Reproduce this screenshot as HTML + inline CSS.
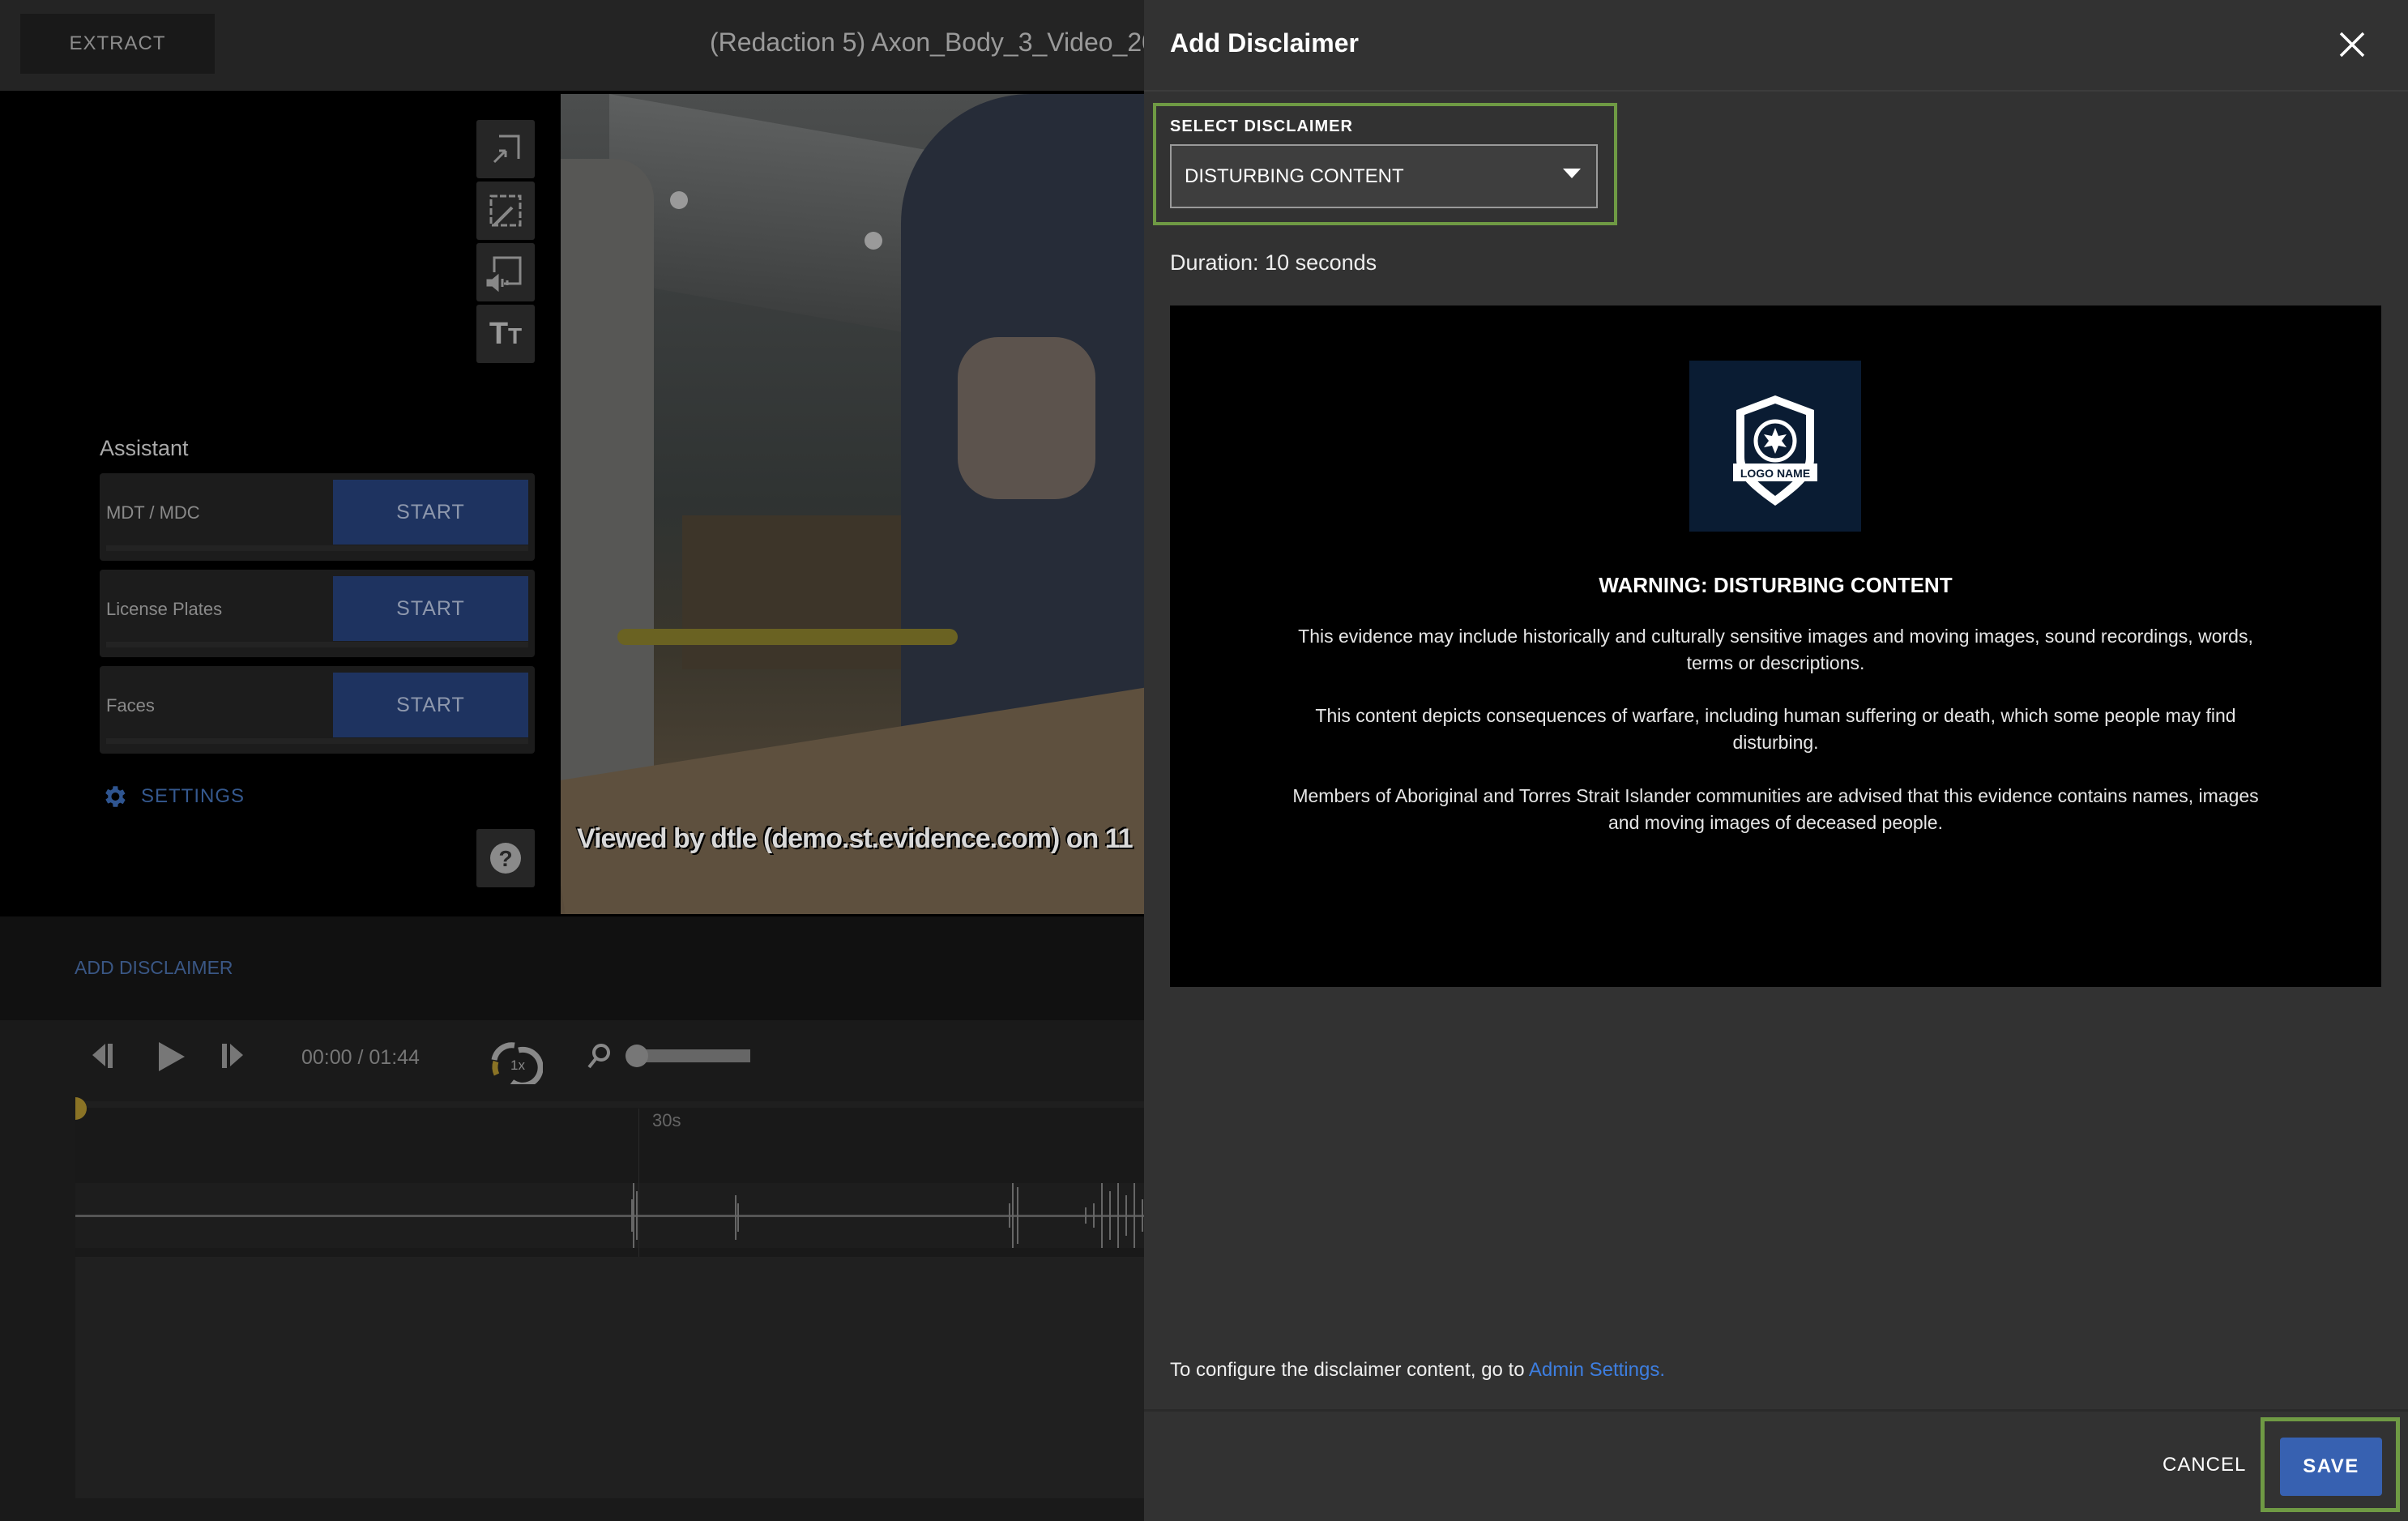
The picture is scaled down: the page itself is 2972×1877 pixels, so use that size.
<!DOCTYPE html>
<html><head><meta charset="utf-8"><style>
*{margin:0;padding:0;box-sizing:border-box}
body{width:2972px;height:1877px;overflow:hidden;background:#1a1a1a;font-family:"Liberation Sans",sans-serif;position:relative}
.a{position:absolute}
.tool{position:absolute;left:588px;width:72px;height:72px;background:#262626;border-radius:3px}
.row{position:absolute;left:123px;width:537px;height:108px;background:#1c1c1c;border-radius:4px}
.row span{position:absolute;left:8px;top:36px;color:#8a8a8a;font-size:22px}
.row .st{position:absolute;left:288px;top:8px;width:241px;height:80px;background:#1e3360;color:#8e98ad;font-size:25px;text-align:center;line-height:80px;letter-spacing:1px}
.row .bar{position:absolute;left:8px;right:8px;bottom:12px;height:7px;background:#232323}
.p{position:absolute;left:1444px;width:1495px;text-align:center;color:#e6e6e6;font-size:23px;line-height:33px}
</style></head><body>
<div class="a" style="left:0;top:0;width:1412px;height:112px;background:#242424"></div>
<div class="a" style="left:25px;top:17px;width:240px;height:74px;background:#191919;color:#8c8c8c;font-size:24px;text-align:center;line-height:74px;letter-spacing:1px">EXTRACT</div>
<div class="a" style="left:876px;top:34px;color:#9a9a9a;font-size:32px;white-space:nowrap;width:536px;overflow:hidden">(Redaction 5) Axon_Body_3_Video_2021</div>
<div class="a" style="left:0;top:112px;width:1412px;height:1019px;background:#000"></div>
<!-- video -->
<div class="a" style="left:692px;top:116px;width:720px;height:1012px;overflow:hidden;background:linear-gradient(180deg,#4c4e4e 0%,#3a3d3d 25%,#2f3332 50%,#3a362c 68%,#5b4d3c 100%)">
 <div class="a" style="left:60px;top:0;width:500px;height:230px;background:linear-gradient(175deg,#5e6060,#3a3c3c);transform:skewY(10deg);transform-origin:0 0"></div>
 <div class="a" style="left:135px;top:120px;width:22px;height:22px;border-radius:50%;background:#9a9a9a"></div>
 <div class="a" style="left:375px;top:170px;width:22px;height:22px;border-radius:50%;background:#9a9a9a"></div>
 <div class="a" style="left:150px;top:520px;width:380px;height:190px;background:#3d3529"></div>
 <div class="a" style="left:0;top:80px;width:115px;height:870px;background:#575755;border-radius:0 50px 0 0"></div>
 <div class="a" style="left:420px;top:0;width:300px;height:920px;background:#262c38;border-radius:160px 0 0 0"></div>
 <div class="a" style="left:490px;top:300px;width:170px;height:200px;background:#5c534d;border-radius:50px"></div>
 <div class="a" style="left:70px;top:660px;width:420px;height:20px;background:#6a6222;border-radius:10px"></div>
 <div class="a" style="left:-20px;top:850px;width:800px;height:400px;background:#5e503e;transform:rotate(-9deg);transform-origin:0 0"></div>
 <div class="a" style="left:20px;top:900px;color:#d8d8d8;font-size:34px;font-weight:bold;white-space:nowrap;text-shadow:2px 2px 0 #000,-2px -2px 0 #000;letter-spacing:-1px">Viewed by dtle (demo.st.evidence.com) on 11</div>
</div>
<!-- tools -->
<div class="tool" style="top:148px"><svg width="72" height="72"><path d="M28 20h24v28" stroke="#888" stroke-width="3" fill="none"/><path d="M22 52l14-14m0 0v8m0-8h-8" stroke="#888" stroke-width="3" fill="none"/></svg></div>
<div class="tool" style="top:224px"><svg width="72" height="72"><rect x="18" y="18" width="36" height="36" stroke="#888" stroke-width="3" fill="none" stroke-dasharray="8 3"/><path d="M22 54l22-22" stroke="#888" stroke-width="4"/></svg></div>
<div class="tool" style="top:300px"><svg width="72" height="72"><path d="M22 36V18h32v32h-20" stroke="#888" stroke-width="3" fill="none"/><path d="M14 46h6l6-5v16l-6-5h-6z M32 44v10 M38 46v6" stroke="#888" stroke-width="3" fill="#888"/></svg></div>
<div class="tool" style="top:376px;color:#999;font-size:38px;font-weight:bold;text-align:center;line-height:72px">T<span style="font-size:28px">T</span></div>
<div class="a" style="left:123px;top:538px;color:#aaa;font-size:27px">Assistant</div>
<div class="row" style="top:584px"><span>MDT / MDC</span><div class="st">START</div><div class="bar"></div></div>
<div class="row" style="top:703px"><span>License Plates</span><div class="st">START</div><div class="bar"></div></div>
<div class="row" style="top:822px"><span>Faces</span><div class="st">START</div><div class="bar"></div></div>
<svg class="a" style="left:124px;top:966px" width="34" height="34" viewBox="0 0 24 24"><path fill="#2f5590" d="M19.4 13a7.5 7.5 0 000-2l2.1-1.6-2-3.5-2.5 1a7 7 0 00-1.7-1L15 3h-4l-.4 2.6a7 7 0 00-1.7 1l-2.5-1-2 3.5L6.6 11a7.5 7.5 0 000 2l-2.1 1.6 2 3.5 2.5-1a7 7 0 001.7 1L11 21h4l.4-2.6a7 7 0 001.7-1l2.5 1 2-3.5zM13 15.5a3.5 3.5 0 110-7 3.5 3.5 0 010 7z"/></svg>
<div class="a" style="left:174px;top:969px;color:#35598f;font-size:24px;letter-spacing:1px">SETTINGS</div>
<div class="tool" style="top:1023px"><svg width="72" height="72"><circle cx="36" cy="36" r="19" fill="#8a8a8a"/><text x="36" y="46" text-anchor="middle" font-size="28" font-weight="bold" fill="#262626" font-family="Liberation Sans">?</text></svg></div>
<div class="a" style="left:0;top:1131px;width:1412px;height:128px;background:#111"></div>
<div class="a" style="left:92px;top:1181px;color:#3a5785;font-size:23px">ADD DISCLAIMER</div>
<div class="a" style="left:0;top:1260px;width:1412px;height:100px;background:#1a1a1a"></div>
<svg class="a" style="left:110px;top:1278px" width="560" height="60">
 <path d="M4 24l16-14v28z" fill="#777"/><rect x="23" y="10" width="6" height="30" fill="#777"/>
 <path d="M86 8l32 18-32 18z" fill="#777"/>
 <rect x="164" y="10" width="6" height="30" fill="#777"/><path d="M174 10l16 14-16 14z" fill="#777"/>
 <text x="262" y="35" fill="#777" font-size="25" font-family="Liberation Sans">00:00  /  01:44</text>
 <path d="M530 18a22 22 0 1 1-8 39" stroke="#888" stroke-width="7" fill="none"/>
 <path d="M500 30a22 22 0 0 1 25-18" stroke="#888" stroke-width="7" fill="none"/>
 <path d="M503 48a22 22 0 0 1-1-16" stroke="#8a7325" stroke-width="7" fill="none"/>
 <text x="520" y="42" fill="#888" font-size="17" font-family="Liberation Sans">1x</text>
</svg>
<svg class="a" style="left:720px;top:1283px" width="210" height="50"><circle cx="22" cy="16" r="9" stroke="#888" stroke-width="4" fill="none"/><path d="M15 24l-8 10" stroke="#888" stroke-width="4"/><rect x="56" y="12" width="150" height="16" fill="#666"/><circle cx="66" cy="20" r="14" fill="#777"/></svg>
<div class="a" style="left:93px;top:1359px;width:1319px;height:8px;background:#1f1f1f"></div>
<div class="a" style="left:93px;top:1368px;width:1319px;height:183px;background:#191919"></div>
<div class="a" style="left:93px;top:1460px;width:1319px;height:80px;background:#1d1d1d"></div>
<div class="a" style="left:93px;top:1354px;width:14px;height:28px;background:#8a7325;border-radius:0 14px 14px 0"></div>
<div class="a" style="left:788px;top:1368px;width:1px;height:183px;background:#2a2a2a"></div>
<div class="a" style="left:805px;top:1370px;color:#666;font-size:22px">30s</div>
<div class="a" style="left:93px;top:1499px;width:1319px;height:3px;background:#555"></div>
<svg class="a" style="left:770px;top:1455px" width="642" height="90"><g stroke="#666" stroke-width="2"><path d="M12 5v80M16 15v60M10 25v40M138 20v55M141 30v35M480 5v80M486 10v70M476 30v30M590 5v80M600 15v60M610 5v80M620 20v50M630 5v80M640 25v40M570 35v20M580 30v30"/></g></svg>
<div class="a" style="left:93px;top:1551px;width:1319px;height:298px;background:#202020"></div>
<!-- dialog -->
<div class="a" style="left:1412px;top:0;width:1560px;height:1877px;background:#323232"></div>
<div class="a" style="left:1412px;top:111px;width:1560px;height:2px;background:#3c3c3c"></div>
<div class="a" style="left:1444px;top:35px;color:#fff;font-size:32px;font-weight:bold">Add Disclaimer</div>
<svg class="a" style="left:2886px;top:38px" width="34" height="34"><path d="M3 3l28 28M31 3L3 31" stroke="#fff" stroke-width="3.5"/></svg>
<div class="a" style="left:1423px;top:127px;width:573px;height:151px;border:4px solid #6f9a44"></div>
<div class="a" style="left:1444px;top:145px;color:#fff;font-size:20px;font-weight:bold;letter-spacing:1px">SELECT DISCLAIMER</div>
<div class="a" style="left:1444px;top:178px;width:528px;height:79px;background:#3e3e3e;border:2px solid #9a9a9a"></div>
<div class="a" style="left:1462px;top:204px;color:#fff;font-size:24px">DISTURBING CONTENT</div>
<svg class="a" style="left:1929px;top:208px" width="22" height="14"><path d="M0 0h22L11 12z" fill="#fff"/></svg>
<div class="a" style="left:1444px;top:309px;color:#eee;font-size:27px">Duration: 10 seconds</div>
<div class="a" style="left:1444px;top:377px;width:1495px;height:841px;background:#000"></div>
<div class="a" style="left:2085px;top:445px;width:212px;height:211px;background:#0a1c33"></div>
<svg class="a" style="left:2135px;top:480px" width="112" height="150" viewBox="0 0 112 150"><path d="M56 8L104 26v60c0 20-14 34-48 58C22 120 8 106 8 86V26z" fill="#fff"/><path d="M56 18L94 32v52c0 16-12 28-38 48C30 112 18 100 18 84V32z" fill="#0a1c33"/><circle cx="56" cy="64" r="24" fill="none" stroke="#fff" stroke-width="5"/><path d="M56 48l4 10 10-2-6 8 6 8-10-2-4 10-4-10-10 2 6-8-6-8 10 2z" fill="#fff"/><rect x="4" y="92" width="104" height="22" fill="#fff"/><text x="56" y="109" text-anchor="middle" font-size="14" font-weight="bold" fill="#0a1c33" font-family="Liberation Sans">LOGO NAME</text></svg>
<div class="p" style="top:706px;font-size:26px;font-weight:bold;color:#fff">WARNING: DISTURBING CONTENT</div>
<div class="p" style="top:769px">This evidence may include historically and culturally sensitive images and moving images, sound recordings, words,<br>terms or descriptions.</div>
<div class="p" style="top:867px">This content depicts consequences of warfare, including human suffering or death, which some people may find<br>disturbing.</div>
<div class="p" style="top:966px">Members of Aboriginal and Torres Strait Islander communities are advised that this evidence contains names, images<br>and moving images of deceased people.</div>
<div class="a" style="left:1444px;top:1677px;color:#eee;font-size:24px">To configure the disclaimer content, go to <span style="color:#3d7ee0">Admin Settings.</span></div>
<div class="a" style="left:1412px;top:1739px;width:1560px;height:3px;background:#2a2a2a"></div>
<div class="a" style="left:2669px;top:1794px;color:#fff;font-size:24px;letter-spacing:1px">CANCEL</div>
<div class="a" style="left:2790px;top:1749px;width:172px;height:117px;border:5px solid #6f9a44"></div>
<div class="a" style="left:2814px;top:1774px;width:126px;height:72px;background:#3761b1;border-radius:4px;color:#fff;font-size:24px;font-weight:bold;text-align:center;line-height:72px;letter-spacing:1.5px">SAVE</div>
</body></html>
